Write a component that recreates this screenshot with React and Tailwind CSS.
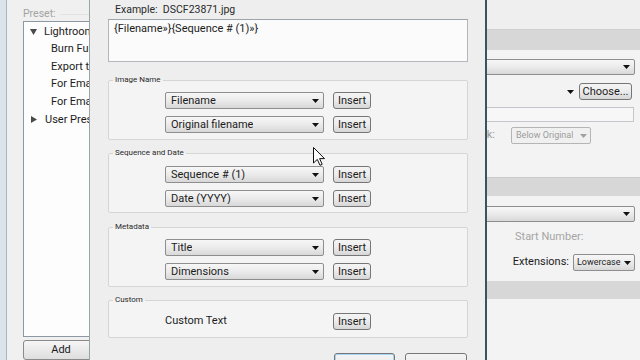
import React from "react";

const Tri = ({ color = "#111" }) => (
  <svg width="7" height="4" viewBox="0 0 7 4" className="shrink-0">
    <path d="M0 0H7L3.5 4Z" fill={color} />
  </svg>
);

function Select({ label, w = "w-[159px]", h = "h-[17px]", disabled = false, justify = "justify-between", size = "text-[11px]", pl = "pl-[5px]", pr = "pr-[4px]" }) {
  return (
    <div
      className={`${w} ${h} shrink-0 flex items-center ${justify} ${pl} ${pr} gap-[2px] rounded-[2px] border ${
        disabled ? "border-[#b5b5b5] bg-[#f0f0f0] text-[#9c9c9c]" : "border-[#8e8e8e] bg-linear-to-b from-[#f7f7f7] via-[#ebebeb] to-[#d8d8d8] text-[#1c1c1c]"
      } ${size}`}
    >
      <span className="whitespace-nowrap leading-none overflow-hidden">{label}</span>
      <Tri color={disabled ? "#a0a0a0" : "#111"} />
    </div>
  );
}

function Btn({ children, w = "w-[38px]", h = "h-[17px]", extra = "" }) {
  return (
    <button
      className={`${w} ${h} shrink-0 flex items-center justify-center rounded-[3px] border border-[#767676] bg-linear-to-b from-[#f4f4f4] via-[#ececec] to-[#d6d6d6] text-[11px] leading-none text-[#1c1c1c] ${extra}`}
    >
      {children}
    </button>
  );
}

function Row({ label }) {
  return (
    <div className="flex items-center pl-[56px] gap-[9px]">
      <Select label={label} />
      <Btn>Insert</Btn>
    </div>
  );
}

function Group({ title, mt, pt = "pt-[6px]", pb = "pb-[6px]", children }) {
  return (
    <fieldset className={`${mt} ${pt} ${pb} border border-[#d5d5d5] bg-[#f4f4f4] rounded-[2px] flex flex-col gap-[7px]`}>
      <legend className="ml-[4px] px-[2px] text-[8px] leading-[12px] text-[#2a2a2a]">{title}</legend>
      {children}
    </fieldset>
  );
}

function TreeItem({ children, indent = "pl-[27px]", tri }) {
  return (
    <div className={`h-[17.6px] flex items-center whitespace-nowrap ${indent} text-[11px] text-[#1c1c1c]`}>
      {tri === "down" && (
        <svg width="7" height="6" viewBox="0 0 7 6" className="mr-[7px] shrink-0">
          <path d="M0 0H7L3.5 6Z" fill="#4a4a4a" />
        </svg>
      )}
      {tri === "right" && (
        <svg width="6" height="7" viewBox="0 0 6 7" className="mr-[8px] shrink-0">
          <path d="M0 0L6 3.5L0 7Z" fill="#4a4a4a" />
        </svg>
      )}
      {children}
    </div>
  );
}

export default function App() {
  return (
    <div className="relative w-[640px] h-[360px] overflow-hidden flex bg-[#f0f0f0] font-['Roboto',sans-serif]">
      {/* Left background window */}
      <div className="w-[89px] shrink-0 h-full flex overflow-hidden">
        <div className="w-[7px] shrink-0 h-full bg-[#dbe4ed] border-r border-[#aab5c0]" />
        <div className="flex-1 min-w-0 h-full bg-[#f0f0f0] pl-[16px] flex flex-col">
          <div className="h-[29px] flex items-center pt-[9px] pb-[1px]">
            <span className="text-[10.5px] text-[#a3a3a3] leading-none whitespace-nowrap">Preset:</span>
            <div className="ml-[4px] w-[60px] h-px bg-[#e2e2e2] shrink-0" />
          </div>
          <div className="w-[110px] h-[316px] shrink-0 bg-[#fdfdfd] border border-[#8d98a3] pt-[1px] flex flex-col">
            <TreeItem indent="pl-[6px]" tri="down">Lightroom Presets</TreeItem>
            <TreeItem>Burn Full-Sized JPEGs</TreeItem>
            <TreeItem>Export to DNG</TreeItem>
            <TreeItem>For Email</TreeItem>
            <TreeItem>For Email (Hard Drive)</TreeItem>
            <TreeItem indent="pl-[7px]" tri="right">User Presets</TreeItem>
          </div>
          <div className="mt-[3px] w-[76px] h-[20px] shrink-0 flex items-start justify-center pt-[1px] rounded-[3px] border border-[#8a8a8a] bg-linear-to-b from-[#f6f6f6] to-[#dedede] text-[11px] text-[#1c1c1c]">
            Add
          </div>
        </div>
      </div>

      {/* Dialog */}
      <div className="w-[398px] shrink-0 h-full bg-[#eeeeee] border-l border-[#9aa2aa] border-r-2 border-r-[#37555f] pl-[18px] pr-[17px] flex flex-col">
        <div className="pt-[3px] h-[17px] pl-[7px] text-[10.5px] leading-[14px] text-[#2a2a2a] whitespace-nowrap">
          Example:&nbsp; DSCF23871.jpg
        </div>
        <div className="mt-[2px] h-[43px] shrink-0 bg-[#fbfbfb] border border-[#b3b7bd] border-t-[#9ea3a9] pl-[5px] pt-[2px] text-[11px] leading-[14px] text-[#1c1c1c] whitespace-nowrap">
          {"{Filename»}{Sequence # (1)»}"}
        </div>

        <Group title="Image Name" mt="mt-[12px]">
          <Row label="Filename" />
          <Row label="Original filename" />
        </Group>

        <Group title="Sequence and Date" mt="mt-[7px]" pt="pt-[7px]" pb="pb-[5px]">
          <Row label="Sequence # (1)" />
          <Row label="Date (YYYY)" />
        </Group>

        <Group title="Metadata" mt="mt-[8px]">
          <Row label="Title" />
          <Row label="Dimensions" />
        </Group>

        <Group title="Custom" mt="mt-[7px]" pt="pt-[7px]" pb="pb-[7px]">
          <div className="flex items-center pl-[56px]">
            <div className="w-[159px] shrink-0 text-[11px] text-[#1c1c1c] whitespace-nowrap">Custom Text</div>
            <div className="ml-[9px]">
              <Btn>Insert</Btn>
            </div>
          </div>
        </Group>

        <div className="mt-[15px] flex pl-[226px] gap-[10px]">
          <Btn w="w-[61px]" h="h-[22px]" extra="border-[#3c7fb1] ring-1 ring-inset ring-[#a6d6f3]">Done</Btn>
          <Btn w="w-[62px]" h="h-[22px]">Cancel</Btn>
        </div>
      </div>

      {/* Right background window */}
      <div className="flex-1 min-w-0 h-full overflow-hidden flex flex-col bg-[#f2f2f2] text-[11px] text-[#1c1c1c]">
        <div className="h-[30px] shrink-0 bg-[#efefef] border-b border-[#cfcfcf]" />
        <div className="h-[20px] shrink-0 bg-[#d7d7d7]" />
        <div className="h-[128px] shrink-0 bg-[#f3f3f3] border-b border-[#c9c9c9] flex flex-col pt-[9px]">
          <div className="flex justify-end pr-[5px]">
            <Select label="" w="w-[200px]" h="h-[16px]" justify="justify-end" />
          </div>
          <div className="mt-[8px] flex justify-end items-center pr-[8px]">
            <Tri />
            <div className="ml-[5px]">
              <Btn w="w-[53px]">Choose...</Btn>
            </div>
          </div>
          <div className="mt-[7px] flex justify-end pr-[6px]">
            <div className="w-[200px] h-[15px] shrink-0 bg-[#f7f7f7] border border-[#c3c7cc]" />
          </div>
          <div className="mt-[5px] flex items-center">
            <div className="w-[8px] shrink-0 flex justify-end whitespace-nowrap text-[#9a9a9a]">Stack:</div>
            <div className="ml-[16px]">
              <Select label="Below Original" w="w-[80px]" size="text-[9px]" pl="pl-[4px]" pr="pr-[3px]" disabled />
            </div>
          </div>
        </div>
        <div className="h-[18px] shrink-0 bg-[#d7d7d7]" />
        <div className="h-[85px] shrink-0 bg-[#f3f3f3] flex flex-col pt-[10px]">
          <div className="flex justify-end pr-[5px]">
            <Select label="" w="w-[200px]" h="h-[16px]" justify="justify-end" />
          </div>
          <div className="mt-[8px] h-[14px] flex items-center pl-[28px] text-[#a5a5a5] whitespace-nowrap">Start Number:</div>
          <div className="mt-[10px] flex items-center justify-end pr-[5px]">
            <span className="whitespace-nowrap">Extensions:</span>
            <div className="ml-[4px]">
              <Select label="Lowercase" w="w-[62px]" size="text-[9px]" pl="pl-[3px]" pr="pr-[3px]" />
            </div>
          </div>
        </div>
        <div className="h-[18px] shrink-0 bg-[#d7d7d7]" />
        <div className="flex-1 bg-[#f3f3f3]" />
      </div>

      {/* Mouse cursor */}
      <svg className="absolute left-[313px] top-[147px]" width="12" height="19" viewBox="0 0 12 19">
        <path d="M0.5 0.5V16L4.3 12.4L7 18.3L9.2 17.3L6.6 11.6H11.5Z" fill="#fff" stroke="#111" strokeWidth="1" strokeLinejoin="round" />
      </svg>
    </div>
  );
}
